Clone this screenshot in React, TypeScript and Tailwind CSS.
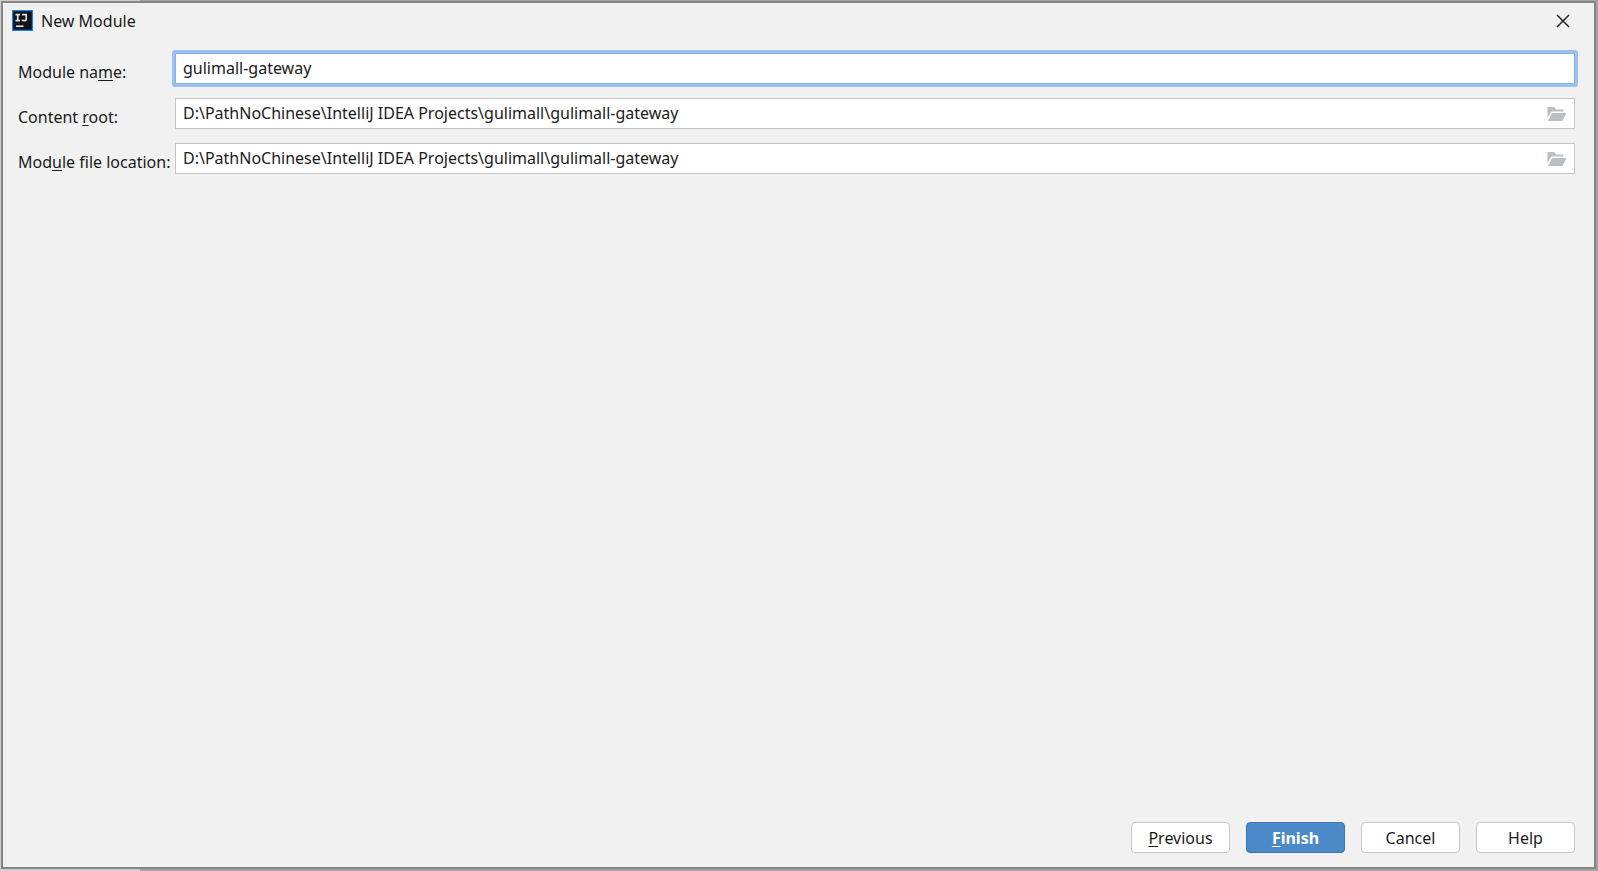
import { useState } from 'react'

const fields = [
  { id: 'name', before: 'Module na', key: 'm', after: 'e:', value: 'gulimall-gateway', browse: false },
  { id: 'root', before: 'Content ', key: 'r', after: 'oot:', value: 'D:\\PathNoChinese\\IntelliJ IDEA Projects\\gulimall\\gulimall-gateway', browse: true },
  { id: 'location', before: 'Mod', key: 'u', after: 'le file location:', value: 'D:\\PathNoChinese\\IntelliJ IDEA Projects\\gulimall\\gulimall-gateway', browse: true },
]

const buttons = [
  { key: 'P', label: 'revious', primary: false },
  { key: 'F', label: 'inish', primary: true },
  { key: '', label: 'Cancel', primary: false },
  { key: '', label: 'Help', primary: false },
]

const Logo = () => (
  <svg width="21" height="21" viewBox="0 0 21 21" aria-hidden="true">
    <rect width="21" height="21" fill="#1580f5" />
    <rect x="1.2" y="1.2" width="18.6" height="18.6" fill="#121417" />
    <path d="M3.5 4.7h4.5M5.75 4.7v6M3.5 10.7h4.5M10 4.7h4.2v4.2q0 1.8-1.9 1.8t-2.3-1" fill="none" stroke="#dedede" strokeWidth="1.7" />
    <path d="M4 16.2h7.5" stroke="#f0f0f0" strokeWidth="1.5" />
  </svg>
)

const Folder = () => (
  <svg width="20" height="16" viewBox="0 0 20 16" aria-hidden="true">
    <path d="M0.5 1h6.5l2 2.5h7.5v2H4.5L0.5 12z" fill="#b9bfc4" />
    <path d="M5 7h14.5l-4 8H1z" fill="#b9bfc4" />
  </svg>
)

const App = () => {
  const [values, setValues] = useState(fields.map((f) => f.value))

  return (
    <div className="flex h-screen w-full bg-[linear-gradient(to_right,#cfcfcf_140px,#a3a3a3_140px)] pt-px pr-0.5 pb-0.5 pl-px font-['Noto_Sans',sans-serif] text-base leading-6 text-[#1a1a1a]">
      <main className="flex grow flex-col border-2 border-[#858585] bg-[#f1f1f1]">
        {/* Title bar */}
        <header className="flex h-[35px] items-center gap-2 pr-5 pl-[9px]">
          <Logo />
          <h1 className="grow">New Module</h1>
          <button type="button" aria-label="Close" className="p-1">
            <svg width="14" height="14" viewBox="0 0 14 14" aria-hidden="true">
              <path d="M1 1l12 12M13 1L1 13" stroke="#222" strokeWidth="1.5" />
            </svg>
          </button>
        </header>

        <form className="flex grow flex-col justify-between pt-[15px] pr-[19px] pb-3.5 pl-[15px]">
          {/* Fields */}
          <div className="flex flex-col gap-3.5">
            {fields.map((f, i) => (
              <div key={f.id} className="flex">
                <label htmlFor={f.id} className="w-[157px] shrink-0 pt-[7px] whitespace-nowrap">
                  {f.before}
                  <u className="underline-offset-2">{f.key}</u>
                  {f.after}
                </label>
                <div
                  className={
                    f.browse
                      ? 'flex h-[31px] grow items-center border border-[#c4c4c4] bg-white pr-[7px]'
                      : 'flex h-[31px] grow items-center rounded-[1px] border border-[#87afda] bg-white ring-3 ring-[#97c3f3]'
                  }
                >
                  <input
                    id={f.id}
                    value={values[i]}
                    onChange={(e) => setValues(values.map((v, n) => (n === i ? e.target.value : v)))}
                    className="h-full min-w-0 grow px-[7px] pb-0.5 outline-none"
                  />
                  {f.browse && (
                    <button type="button" aria-label="Browse">
                      <Folder />
                    </button>
                  )}
                </div>
              </div>
            ))}
          </div>

          {/* Actions */}
          <div className="flex justify-end gap-4">
            {buttons.map((b) => (
              <button
                key={b.label}
                type="button"
                className={
                  b.primary
                    ? 'h-[31px] w-[99px] rounded-sm border border-[#3b76b8] bg-[#4b89c8] font-bold text-white'
                    : 'h-[31px] w-[99px] rounded-sm border border-[#c6c6c6] bg-white'
                }
              >
                <u className="underline-offset-2">{b.key}</u>
                {b.label}
              </button>
            ))}
          </div>
        </form>
      </main>
    </div>
  )
}

export default App
